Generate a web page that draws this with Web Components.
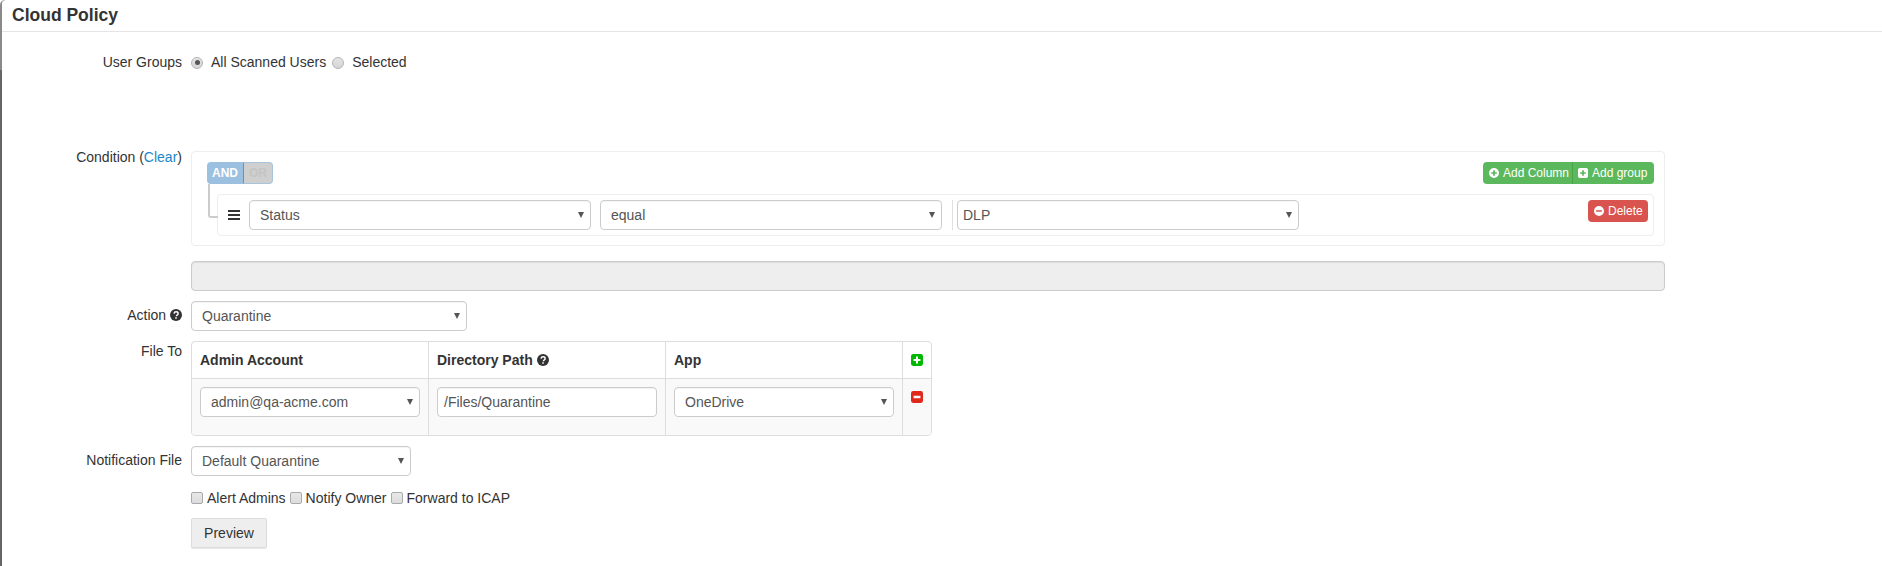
<!DOCTYPE html>
<html>
<head>
<meta charset="utf-8">
<title>Cloud Policy</title>
<style>
  html, body { margin: 0; background: #fff; }
  body { font: 14px/20px "Liberation Sans", Arial, sans-serif; color: #333; }
</style>
</head>
<body>
<policy-page>
  <form-row style="--row-top: 20px">
    <span slot="label">User Groups</span>
    <radio-option checked>All Scanned Users</radio-option>
    <radio-option>Selected</radio-option>
  </form-row>

  <form-row style="--row-top: 79px; --label-top: -4px">
    <span slot="label">Condition (<a-link>Clear</a-link>)</span>
    <query-builder></query-builder>
  </form-row>

  <form-row style="--row-top: 15px">
    <grey-bar></grey-bar>
  </form-row>

  <form-row style="--row-top: 10px; --label-top: 4px">
    <span slot="label">Action <fa-icon name="question" color="#333"></fa-icon></span>
    <select-box style="width: 276px">Quarantine</select-box>
  </form-row>

  <form-row style="--row-top: 10px">
    <span slot="label">File To</span>
    <file-table></file-table>
  </form-row>

  <form-row style="--row-top: 10px; --label-top: 4px">
    <span slot="label">Notification File</span>
    <select-box style="width: 220px">Default Quarantine</select-box>
  </form-row>

  <form-row style="--row-top: 12px">
    <check-option>Alert Admins</check-option>
    <check-option>Notify Owner</check-option>
    <check-option>Forward to ICAP</check-option>
  </form-row>

  <form-row style="--row-top: 10px">
    <plain-button>Preview</plain-button>
  </form-row>
</policy-page>

<script>
// icon shapes, 14 unit box
const ICONS = {
  question: `<path fill-rule="evenodd" d="M7 0a7 7 0 1 0 0 14A7 7 0 0 0 7 0z"/><path d="M4.7 5.3C4.9 3.9 5.8 3.2 7.1 3.2c1.4 0 2.4.8 2.4 2 0 1-.6 1.5-1.3 2-.5.3-.7.6-.7 1.2" fill="none" stroke="#fff" stroke-width="1.7"/><rect x="6.1" y="9.6" width="1.8" height="1.8" fill="#fff"/>`,
  "plus-circle": `<path fill-rule="evenodd" d="M7 0a7 7 0 1 0 0 14A7 7 0 0 0 7 0zM5.8 3h2.4v2.8H11v2.4H8.2V11H5.8V8.2H3V5.8h2.8z"/>`,
  "minus-circle": `<path fill-rule="evenodd" d="M7 0a7 7 0 1 0 0 14A7 7 0 0 0 7 0zM3 5.8h8v2.4H3z"/>`,
  "plus-square": `<path fill-rule="evenodd" d="M2.5 0h9A2.5 2.5 0 0 1 14 2.5v9a2.5 2.5 0 0 1-2.5 2.5h-9A2.5 2.5 0 0 1 0 11.5v-9A2.5 2.5 0 0 1 2.5 0zM5.8 3v2.8H3v2.4h2.8V11h2.4V8.2H11V5.8H8.2V3z"/>`,
  "minus-square": `<path fill-rule="evenodd" d="M2.5 0h9A2.5 2.5 0 0 1 14 2.5v9a2.5 2.5 0 0 1-2.5 2.5h-9A2.5 2.5 0 0 1 0 11.5v-9A2.5 2.5 0 0 1 2.5 0zM3 5.6v2.8h8V5.6z"/>`,
  bars: `<path d="M1 3h12v2H1zM1 7h12v2H1zM1 11h12v2H1z"/>`
};

class FaIcon extends HTMLElement {
  constructor() {
    super();
    this.attachShadow({ mode: "open" });
  }
  connectedCallback() {
    const size = this.getAttribute("size") || 12;
    const color = this.getAttribute("color") || "currentColor";
    this.shadowRoot.innerHTML = `
      <style>
        :host { display: inline-block; flex: none; width: ${size}px; height: ${size}px; vertical-align: -1px; line-height: 0; }
        svg { width: 100%; height: 100%; fill: ${color}; display: block; }
      </style>
      <svg viewBox="0 0 14 14">${ICONS[this.getAttribute("name")]}</svg>`;
  }
}
customElements.define("fa-icon", FaIcon);

class PolicyPage extends HTMLElement {
  constructor() {
    super();
    this.attachShadow({ mode: "open" }).innerHTML = `
      <style>
        :host { display: block; height: 566px; box-sizing: border-box; padding-left: 2px; background: linear-gradient(#8a8a8a 70px, #666 70px); border-top-left-radius: 5px; overflow: hidden; }
        main { height: 100%; background: #fff; border-top-left-radius: 4px; }
        header { height: 31px; border-bottom: 1px solid #e5e5e5; padding-left: 10px; font: bold 17.5px/30px "Liberation Sans", Arial, sans-serif; color: #333; }
      </style>
      <main><header>Cloud Policy</header><slot></slot></main>`;
  }
}
customElements.define("policy-page", PolicyPage);

class FormRow extends HTMLElement {
  constructor() {
    super();
    this.attachShadow({ mode: "open" }).innerHTML = `
      <style>
        :host { display: grid; grid-template-columns: 180px 1fr; column-gap: 9px; margin-top: var(--row-top, 0); }
        .label { text-align: right; white-space: nowrap; margin-top: var(--label-top, 0); }
        .body { display: flex; align-items: flex-start; }
      </style>
      <div class="label"><slot name="label"></slot></div>
      <div class="body"><slot></slot></div>`;
  }
}
customElements.define("form-row", FormRow);

class ALink extends HTMLElement {
  constructor() {
    super();
    this.attachShadow({ mode: "open" }).innerHTML = `<style>:host { color: #1c86c8; }</style><slot></slot>`;
  }
}
customElements.define("a-link", ALink);

class RadioOption extends HTMLElement {
  constructor() {
    super();
    this.attachShadow({ mode: "open" }).innerHTML = `
      <style>
        :host { display: inline-flex; align-items: center; gap: 8px; margin-right: 6px; }
        i { width: 12px; height: 12px; margin-top: 1px; box-sizing: border-box; border: 1px solid #b5b5b5; border-radius: 50%; background: linear-gradient(#e4e4e4, #d6d6d6); display: flex; align-items: center; justify-content: center; }
        b { width: 5px; height: 5px; border-radius: 50%; background: #555; display: none; }
        :host([checked]) b { display: block; }
      </style>
      <i><b></b></i><span><slot></slot></span>`;
  }
}
customElements.define("radio-option", RadioOption);

class CheckOption extends HTMLElement {
  constructor() {
    super();
    this.attachShadow({ mode: "open" }).innerHTML = `
      <style>
        :host { display: inline-flex; align-items: center; gap: 4px; margin-right: 4px; }
        i { width: 12px; height: 12px; box-sizing: border-box; border: 1px solid #aaa; border-radius: 2px; background: linear-gradient(#e8e8e8, #dcdcdc); }
      </style>
      <i></i><span><slot></slot></span>`;
  }
}
customElements.define("check-option", CheckOption);

class SelectBox extends HTMLElement {
  constructor() {
    super();
    this.attachShadow({ mode: "open" }).innerHTML = `
      <style>
        :host { display: flex; align-items: center; justify-content: space-between; box-sizing: border-box; height: 30px; padding: 0 6px 0 var(--pad, 10px); border: 1px solid #ccc; border-radius: 4px; background: #fff; color: #555; box-shadow: inset 0 1px 1px rgba(0,0,0,.04); flex: none; }
        i { width: 0; height: 0; border: 3px solid transparent; border-width: 6px 3px 0; border-top-color: #555; }
      </style>
      <span><slot></slot></span><i></i>`;
  }
}
customElements.define("select-box", SelectBox);

class GreyBar extends HTMLElement {
  constructor() {
    super();
    this.attachShadow({ mode: "open" }).innerHTML = `
      <style>
        :host { display: block; width: 1474px; height: 30px; box-sizing: border-box; background: #eee; border: 1px solid #ccc; border-radius: 4px; box-shadow: inset 0 1px 1px rgba(0,0,0,.075); }
      </style>`;
  }
}
customElements.define("grey-bar", GreyBar);

class PlainButton extends HTMLElement {
  constructor() {
    super();
    this.attachShadow({ mode: "open" }).innerHTML = `
      <style>
        :host { display: block; box-sizing: border-box; width: 76px; height: 30px; line-height: 28px; text-align: center; background: #eee; border: 1px solid #ddd; border-radius: 2px; box-shadow: 0 1px 1px rgba(0,0,0,.1); color: #333; }
      </style><slot></slot>`;
  }
}
customElements.define("plain-button", PlainButton);

class QueryBuilder extends HTMLElement {
  constructor() {
    super();
    this.attachShadow({ mode: "open" }).innerHTML = `
      <style>
        :host { display: block; position: relative; box-sizing: border-box; width: 1474px; height: 95px; padding: 10px; border: 1px solid #eee; border-radius: 4px; }
        .top { display: flex; justify-content: space-between; padding-left: 5px; }
        .group { display: flex; font-size: 12px; line-height: 22px; color: #fff; height: 22px; white-space: nowrap; }
        .group span { display: flex; align-items: center; gap: 4px; box-sizing: border-box; }
        .and { width: 36px; background: #9cc0e0; border-radius: 4px 0 0 4px; font-weight: bold; justify-content: center; }
        .or { width: 30px; background: #cfcfcf; color: #c4c4c4; border-radius: 0 4px 4px 0; border: 1px solid #a8c4dc; border-left: 1px solid #5f96c6; font-weight: bold; justify-content: center; }
        .green { background: #5cb85c; }
        .addcol { width: 90px; padding-left: 6px; border-radius: 4px 0 0 4px; border-right: 1px solid #47a447; }
        .addgrp { width: 81px; padding-left: 5px; border-radius: 0 4px 4px 0; }
        .rule { display: flex; align-items: flex-start; margin: 10px 0 0 15px; height: 42px; box-sizing: border-box; padding: 5px 5px 0 9px; border: 1px solid #eee; border-radius: 4px; }
        .rule > fa-icon { margin: 7px 8px 0 0; }
        .sep { width: 1px; height: 30px; background: #e0e0e0; margin: 0 4px 0 0; }
        .del { margin-left: auto; display: flex; align-items: center; gap: 4px; box-sizing: border-box; padding-left: 6px; width: 60px; height: 22px; background: #d9534f; border-radius: 4px; color: #fff; font-size: 12px; }
        .line { position: absolute; left: 16px; top: 32px; width: 10px; height: 34px; border-left: 2px solid #ccc; border-bottom: 2px solid #ccc; border-bottom-left-radius: 3px; box-sizing: border-box; }
      </style>
      <div class="top">
        <div class="group"><span class="and">AND</span><span class="or">OR</span></div>
        <div class="group"><span class="green addcol"><fa-icon name="plus-circle" size="10"></fa-icon>Add Column</span><span class="green addgrp"><fa-icon name="plus-square" size="10"></fa-icon>Add group</span></div>
      </div>
      <div class="line"></div>
      <div class="rule">
        <fa-icon name="bars" size="14" color="#333"></fa-icon>
        <select-box style="width:342px; margin-right:9px">Status</select-box>
        <select-box style="width:342px; margin-right:10px">equal</select-box>
        <div class="sep"></div>
        <select-box style="width:342px; --pad: 5px">DLP</select-box>
        <div class="del"><fa-icon name="minus-circle" size="10"></fa-icon>Delete</div>
      </div>`;
  }
}
customElements.define("query-builder", QueryBuilder);

class FileTable extends HTMLElement {
  constructor() {
    super();
    this.attachShadow({ mode: "open" }).innerHTML = `
      <style>
        :host { display: grid; grid-template-columns: 237px 237px 237px 28px; grid-template-rows: 37px 56px; width: 741px; box-sizing: border-box; border: 1px solid #ddd; border-radius: 4px; overflow: hidden; }
        div { box-sizing: border-box; border-right: 1px solid #ddd; padding: 8px; }
        div:nth-of-type(4n) { border-right: 0; }
        .h { font-weight: bold; border-bottom: 1px solid #ddd; }
        .b { background: #f9f9f9; }
        .i { padding: 12px 8px 0; }
        .i fa-icon { display: block; }
        .box { display: block; box-sizing: border-box; height: 30px; line-height: 28px; padding: 0 6px; border: 1px solid #ccc; border-radius: 4px; background: #fff; color: #555; box-shadow: inset 0 1px 1px rgba(0,0,0,.06); }
      </style>
      <div class="h">Admin Account</div>
      <div class="h">Directory Path <fa-icon name="question" color="#333"></fa-icon></div>
      <div class="h">App</div>
      <div class="h i"><fa-icon name="plus-square" size="12" color="#00b800"></fa-icon></div>
      <div class="b"><select-box>admin@qa-acme.com</select-box></div>
      <div class="b"><span class="box">/Files/Quarantine</span></div>
      <div class="b"><select-box>OneDrive</select-box></div>
      <div class="b i"><fa-icon name="minus-square" size="12" color="#e0281a"></fa-icon></div>`;
  }
}
customElements.define("file-table", FileTable);
</script>
</body>
</html>
